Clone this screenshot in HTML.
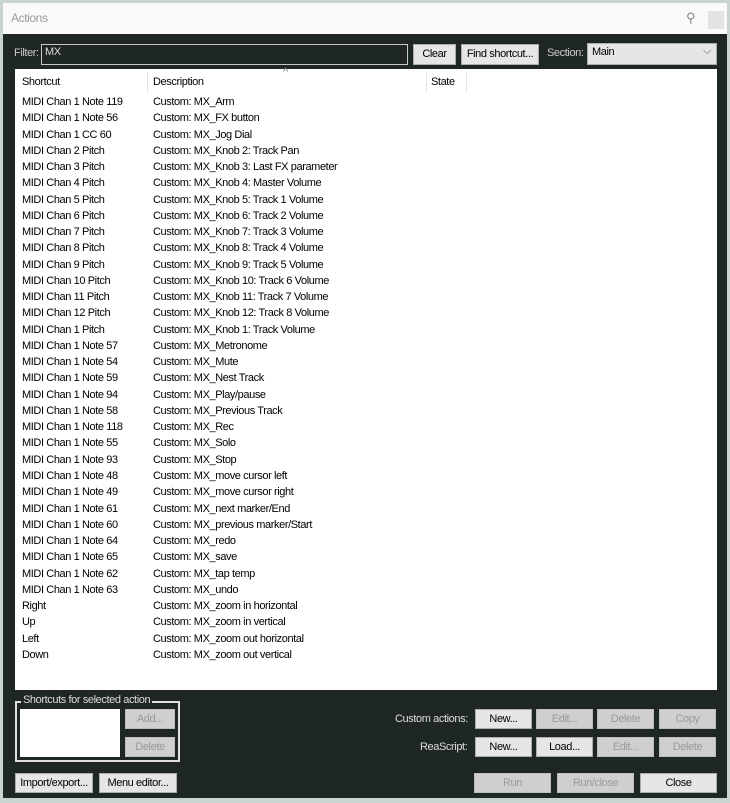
<!DOCTYPE html>
<html><head><style>
*{margin:0;padding:0;box-sizing:border-box}
body{width:730px;height:803px;background:#c9d3d2;font-family:"Liberation Sans",sans-serif;font-size:11px;position:relative;overflow:hidden;letter-spacing:-0.4px}
.a{position:absolute}
.btn{position:absolute;background:#e6e6e6;border:1px solid #adadad;color:#000;text-align:center;line-height:18px;height:20px}
.dis{background:#cfcfcf;color:#9a9a9a;border-color:#bdbdbd}
.row{position:absolute;left:22px;height:16px;line-height:16px;color:#000}
.d{position:absolute;left:131px;white-space:nowrap}
</style></head><body>
<div class="a" style="left:3px;top:3px;width:724px;height:31px;background:#fafafa"></div>
<div class="a" style="left:11px;top:11px;color:#9a9a9a;font-size:12px">Actions</div>
<div class="a" style="left:686px;top:10px;color:#888;font-size:13px">⚲</div>
<div class="a" style="left:708px;top:11px;width:16px;height:18px;background:#e3e3e3"></div>
<div class="a" style="left:3px;top:34px;width:724px;height:764px;background:#1f2725"></div>
<div class="a" style="left:14px;top:47px;color:#ccc">Filter:</div>
<div class="a" style="left:41px;top:44px;width:367px;height:21px;border:1px solid #c8c8c8;background:#1f2725;color:#ddd;padding:1px 3px">MX</div>
<div class="btn" style="left:413px;top:44px;width:43px;height:21px">Clear</div>
<div class="btn" style="left:461px;top:44px;width:78px;height:21px">Find shortcut...</div>
<div class="a" style="left:547px;top:47px;color:#ccc">Section:</div>
<div class="a" style="left:587px;top:43px;width:130px;height:22px;background:#e6e6e6;border:1px solid #adadad;padding:2px 4px">Main<span style="position:absolute;right:5px;top:1px;color:#555">⌵</span></div>
<div class="a" style="left:15px;top:69px;width:702px;height:621px;background:#fff"></div>
<div class="a" style="left:147px;top:72px;width:1px;height:21px;background:#e5e5e5"></div>
<div class="a" style="left:426px;top:72px;width:1px;height:21px;background:#e5e5e5"></div>
<div class="a" style="left:466px;top:72px;width:1px;height:21px;background:#e5e5e5"></div>
<div class="a" style="left:283px;top:66px;color:#777;font-size:11px">^</div>
<div class="a" style="left:22px;top:76px">Shortcut</div>
<div class="a" style="left:153px;top:76px">Description</div>
<div class="a" style="left:431px;top:76px">State</div>
<div id="rows"></div>
<script>
var r=[["MIDI Chan 1 Note 119","MX_Arm"],["MIDI Chan 1 Note 56","MX_FX button"],["MIDI Chan 1 CC 60","MX_Jog Dial"],["MIDI Chan 2 Pitch","MX_Knob 2: Track Pan"],["MIDI Chan 3 Pitch","MX_Knob 3: Last FX parameter"],["MIDI Chan 4 Pitch","MX_Knob 4: Master Volume"],["MIDI Chan 5 Pitch","MX_Knob 5: Track 1 Volume"],["MIDI Chan 6 Pitch","MX_Knob 6: Track 2 Volume"],["MIDI Chan 7 Pitch","MX_Knob 7: Track 3 Volume"],["MIDI Chan 8 Pitch","MX_Knob 8: Track 4 Volume"],["MIDI Chan 9 Pitch","MX_Knob 9: Track 5 Volume"],["MIDI Chan 10 Pitch","MX_Knob 10: Track 6 Volume"],["MIDI Chan 11 Pitch","MX_Knob 11: Track 7 Volume"],["MIDI Chan 12 Pitch","MX_Knob 12: Track 8 Volume"],["MIDI Chan 1 Pitch","MX_Knob 1: Track Volume"],["MIDI Chan 1 Note 57","MX_Metronome"],["MIDI Chan 1 Note 54","MX_Mute"],["MIDI Chan 1 Note 59","MX_Nest Track"],["MIDI Chan 1 Note 94","MX_Play/pause"],["MIDI Chan 1 Note 58","MX_Previous Track"],["MIDI Chan 1 Note 118","MX_Rec"],["MIDI Chan 1 Note 55","MX_Solo"],["MIDI Chan 1 Note 93","MX_Stop"],["MIDI Chan 1 Note 48","MX_move cursor left"],["MIDI Chan 1 Note 49","MX_move cursor right"],["MIDI Chan 1 Note 61","MX_next marker/End"],["MIDI Chan 1 Note 60","MX_previous marker/Start"],["MIDI Chan 1 Note 64","MX_redo"],["MIDI Chan 1 Note 65","MX_save"],["MIDI Chan 1 Note 62","MX_tap temp"],["MIDI Chan 1 Note 63","MX_undo"],["Right","MX_zoom in horizontal"],["Up","MX_zoom in vertical"],["Left","MX_zoom out horizontal"],["Down","MX_zoom out vertical"]];
var h="";r.forEach(function(x,i){h+='<div class="row" style="top:'+(94+i*16.26)+'px">'+x[0]+'<span class="d">Custom: '+x[1]+'</span></div>'});
document.getElementById("rows").innerHTML=h;
</script>
<div class="a" style="left:15px;top:701px;width:165px;height:61px;border:2px solid #e0e0e0"></div>
<div class="a" style="left:21px;top:694px;background:#1f2725;color:#ddd;padding:0 2px">Shortcuts for selected action</div>
<div class="a" style="left:20px;top:709px;width:100px;height:48px;background:#fff"></div>
<div class="btn dis" style="left:125px;top:709px;width:50px">Add...</div>
<div class="btn dis" style="left:125px;top:737px;width:50px">Delete</div>
<div class="a" style="left:395px;top:713px;color:#ddd">Custom actions:</div>
<div class="a" style="left:420px;top:741px;color:#ddd">ReaScript:</div>
<div class="btn" style="left:475px;top:709px;width:57px">New...</div>
<div class="btn dis" style="left:536px;top:709px;width:57px">Edit...</div>
<div class="btn dis" style="left:597px;top:709px;width:57px">Delete</div>
<div class="btn dis" style="left:659px;top:709px;width:57px">Copy</div>
<div class="btn" style="left:475px;top:737px;width:57px">New...</div>
<div class="btn" style="left:536px;top:737px;width:57px">Load...</div>
<div class="btn dis" style="left:597px;top:737px;width:57px">Edit...</div>
<div class="btn dis" style="left:659px;top:737px;width:57px">Delete</div>
<div class="btn" style="left:15px;top:773px;width:78px">Import/export...</div>
<div class="btn" style="left:99px;top:773px;width:78px">Menu editor...</div>
<div class="btn dis" style="left:474px;top:773px;width:77px">Run</div>
<div class="btn dis" style="left:557px;top:773px;width:77px">Run/close</div>
<div class="btn" style="left:640px;top:773px;width:77px">Close</div>
</body></html>
